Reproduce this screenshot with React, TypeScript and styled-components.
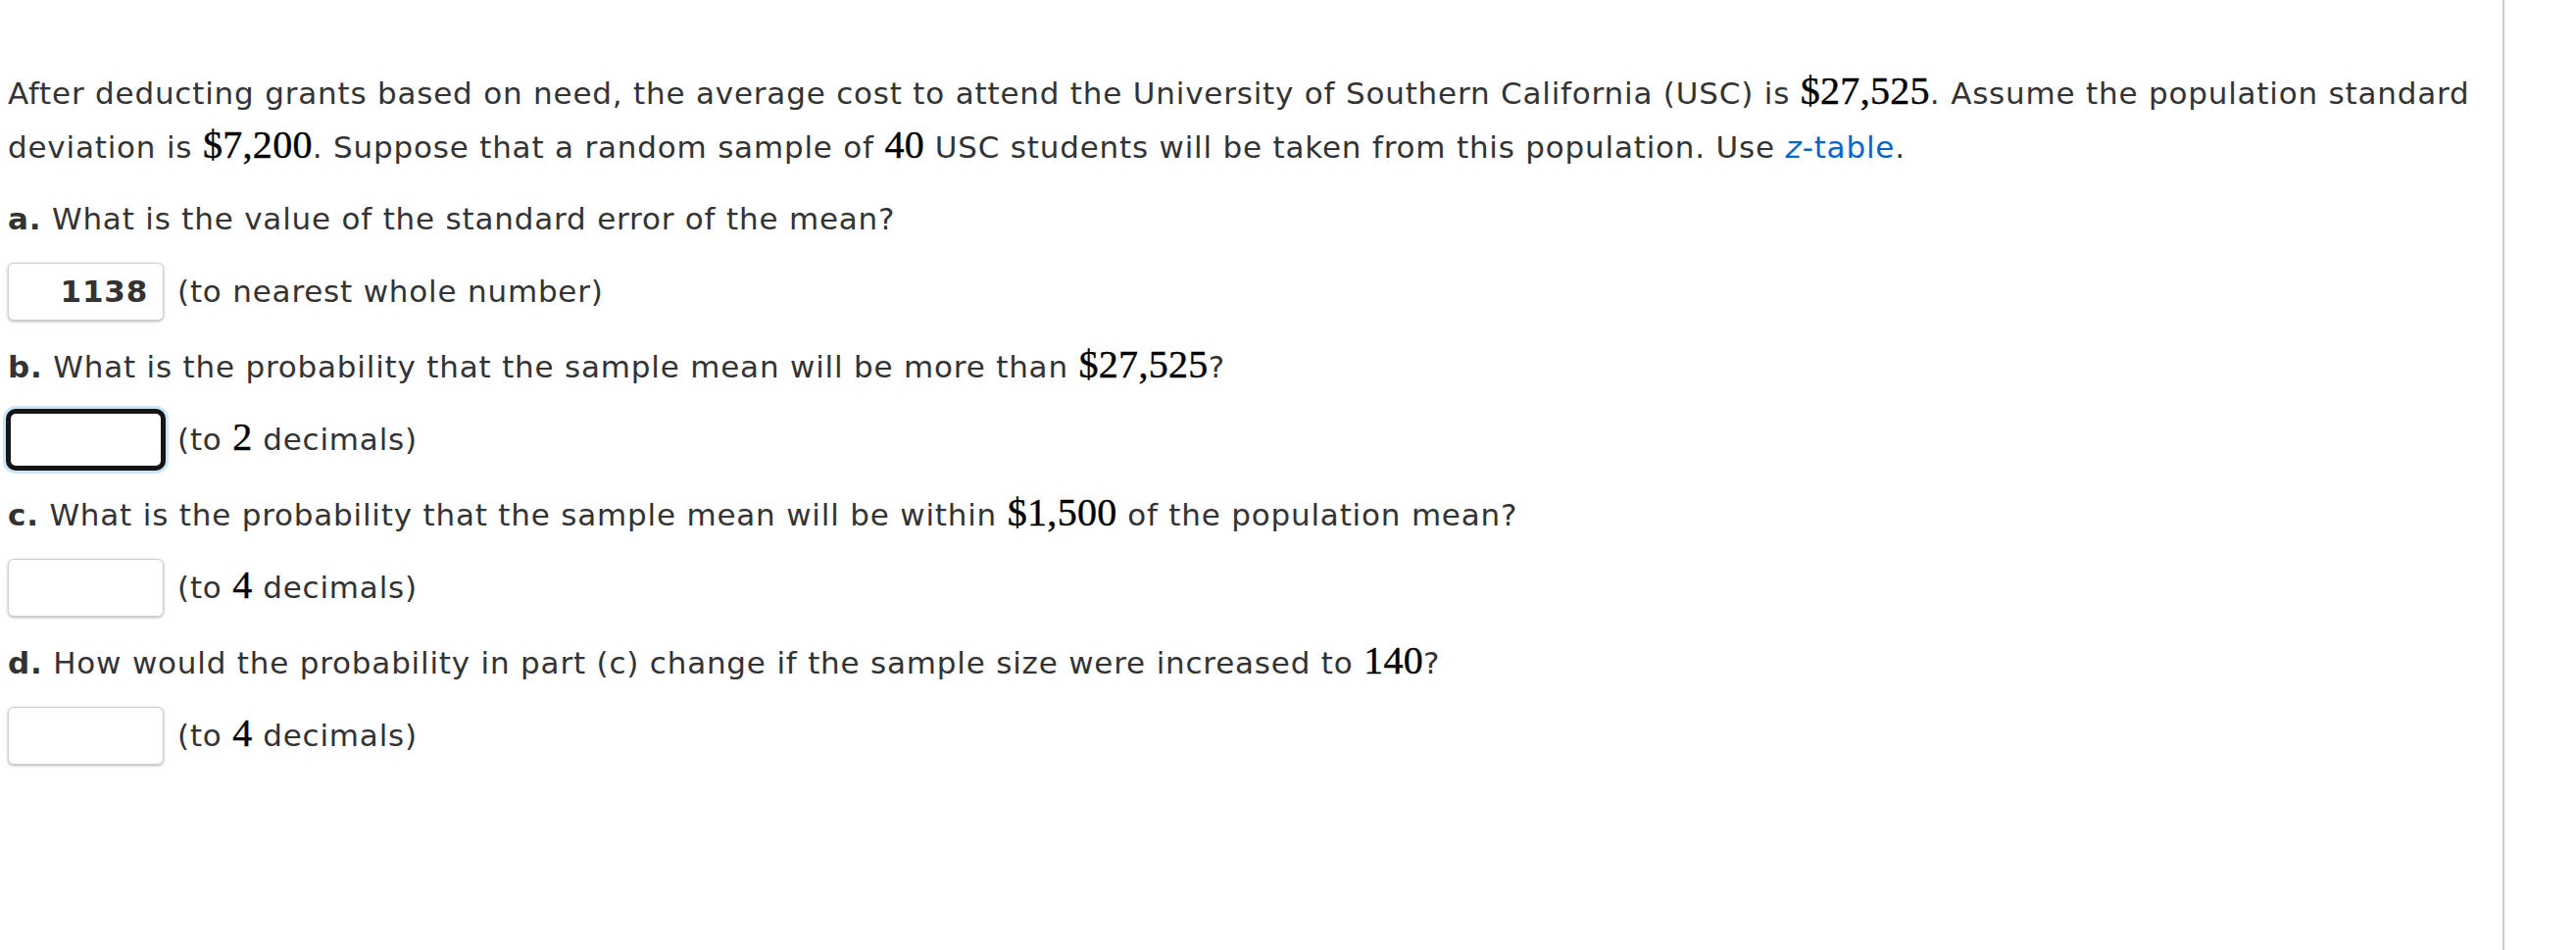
import React from 'react';
import styled, { createGlobalStyle } from 'styled-components';

const GlobalStyle = createGlobalStyle`
  html, body {
    margin: 0;
    padding: 0;
    background: #ffffff;
  }
`;

const Page = styled.div`
  width: 2555px;
  min-height: 969px;
  box-sizing: border-box;
  border-right: 2px solid #cccccc;
  padding: 68px 0 0 8px;
  font-family: 'DejaVu Sans', Verdana, sans-serif;
  font-size: 31px;
  letter-spacing: 0.8px;
  line-height: 55px;
  color: #333333;
`;

const Intro = styled.p`
  margin: 0 0 18px 0;
`;

const IntroLine = styled.span`
  display: block;
  white-space: nowrap;
`;

const MathNum = styled.span`
  font-family: 'Liberation Serif', 'Times New Roman', serif;
  font-size: 40px;
  letter-spacing: 0.3px;
  color: #000000;
  line-height: 1;
  -webkit-text-stroke: 0.4px #000000;
`;

const TableLink = styled.a`
  color: #0066cc;
  text-decoration: none;
`;

const Part = styled.div`
  margin-bottom: 20px;
`;

const Question = styled.div`
  height: 55px;
  white-space: nowrap;
`;

const Label = styled.b`
  font-weight: 700;
`;

const AnswerRow = styled.div`
  display: flex;
  align-items: center;
  gap: 14px;
  margin-top: 17px;
  height: 59px;
`;

const AnswerBox = styled.div<{ $focused?: boolean }>`
  width: 159px;
  height: 59px;
  box-sizing: border-box;
  border-radius: ${p => (p.$focused ? '8px' : '6px')};
  border: ${p => (p.$focused ? '3px solid #151515' : '1px solid #cfcfcf')};
  box-shadow: ${p =>
    p.$focused
      ? '0 0 0 2px #151515, 0 0 0 5px rgba(185, 222, 246, 0.75)'
      : '0 1px 3px rgba(0, 0, 0, 0.3)'};
  background: #ffffff;
  display: flex;
  align-items: center;
  justify-content: flex-end;
  padding-right: 15px;
  font-weight: 700;
  color: #333333;
`;

const Hint = styled.span`
  white-space: nowrap;
`;

export default function App() {
  return (
    <>
      <GlobalStyle />
      <Page>
        <Intro>
          <IntroLine>
            After deducting grants based on need, the average cost to attend the University of
            Southern California (USC) is <MathNum>$27,525</MathNum>. Assume the population standard
          </IntroLine>
          <IntroLine>
            deviation is <MathNum>$7,200</MathNum>. Suppose that a random sample of{' '}
            <MathNum>40</MathNum> USC students will be taken from this population. Use{' '}
            <TableLink href="#">
              <i>z</i>-table
            </TableLink>
            .
          </IntroLine>
        </Intro>

        <Part>
          <Question>
            <Label>a.</Label> What is the value of the standard error of the mean?
          </Question>
          <AnswerRow>
            <AnswerBox>1138</AnswerBox>
            <Hint>(to nearest whole number)</Hint>
          </AnswerRow>
        </Part>

        <Part>
          <Question>
            <Label>b.</Label> What is the probability that the sample mean will be more than{' '}
            <MathNum>$27,525</MathNum>?
          </Question>
          <AnswerRow>
            <AnswerBox $focused />
            <Hint>
              (to <MathNum>2</MathNum> decimals)
            </Hint>
          </AnswerRow>
        </Part>

        <Part>
          <Question>
            <Label>c.</Label> What is the probability that the sample mean will be within{' '}
            <MathNum>$1,500</MathNum> of the population mean?
          </Question>
          <AnswerRow>
            <AnswerBox />
            <Hint>
              (to <MathNum>4</MathNum> decimals)
            </Hint>
          </AnswerRow>
        </Part>

        <Part>
          <Question>
            <Label>d.</Label> How would the probability in part (c) change if the sample size were
            increased to <MathNum>140</MathNum>?
          </Question>
          <AnswerRow>
            <AnswerBox />
            <Hint>
              (to <MathNum>4</MathNum> decimals)
            </Hint>
          </AnswerRow>
        </Part>
      </Page>
    </>
  );
}
